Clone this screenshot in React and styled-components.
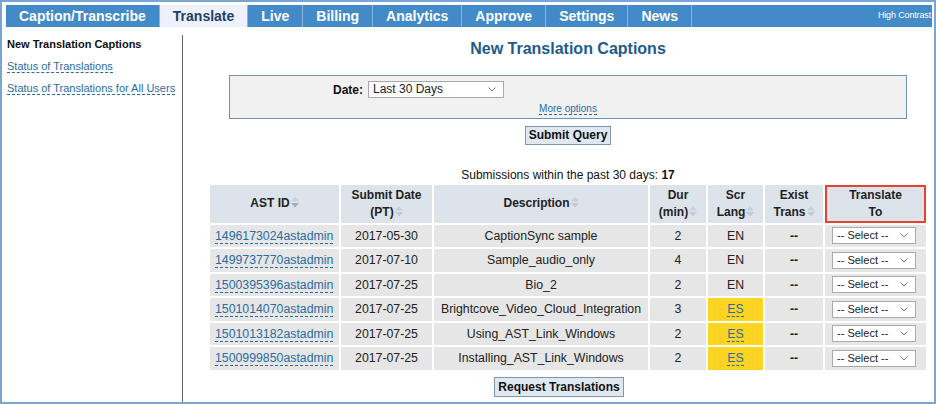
import React from "react";
import styled, { createGlobalStyle } from "styled-components";

const Global = createGlobalStyle`
  html, body { margin: 0; padding: 0; background: #fff; }
  body { font-family: "Liberation Sans", Arial, sans-serif; color: #222; }
  * { box-sizing: border-box; }
`;

const Frame = styled.div`
  width: 936px;
  height: 404px;
  border: 2px solid #78a5d1;
  padding: 3px 2px 0 4px;
  display: flex;
  flex-direction: column;
  overflow: hidden;
`;

const Nav = styled.nav`
  height: 22px;
  background: #428bc8;
  display: flex;
  align-items: stretch;
  flex-shrink: 0;
`;

const Tab = styled.a`
  display: flex;
  align-items: center;
  padding: 0 13px;
  font-size: 14px;
  font-weight: bold;
  color: ${(p) => (p.$active ? "#1c3f66" : "#fff")};
  background: ${(p) => (p.$active ? "#eef0fb" : "transparent")};
  border-right: 1px solid #8ab6dd;
  text-decoration: none;
  white-space: nowrap;
`;

const NavSpacer = styled.div`
  flex: 1;
`;

const Contrast = styled.a`
  align-self: center;
  margin-top: -2px;
  font-size: 9px;
  letter-spacing: -0.15px;
  color: #fff;
  white-space: nowrap;
  padding-right: 1px;
`;

const Body = styled.div`
  flex: 1;
  display: flex;
  margin-top: 8px;
  min-height: 0;
`;

const Sidebar = styled.aside`
  width: 177px;
  border-right: 1px solid #666;
  padding-left: 1px;
  flex-shrink: 0;
`;

const SideItem = styled.div`
  font-size: 11px;
  line-height: 18px;
  margin-bottom: 4px;
  font-weight: ${(p) => (p.$current ? "bold" : "normal")};
  color: #111;
`;

const Link = styled.a`
  color: #2b6ca3;
  text-decoration: none;
  border-bottom: 1px dashed #2b6ca3;
  cursor: pointer;
`;

const Main = styled.main`
  flex: 1;
  padding: 4px 0 0 21px;
  display: flex;
  flex-direction: column;
  align-items: center;
`;

const Title = styled.h1`
  margin: 0;
  font-size: 16px;
  line-height: 20px;
  font-weight: bold;
  color: #1d5b8c;
`;

const FilterBox = styled.div`
  margin-top: 16px;
  width: 678px;
  height: 44px;
  background: #f1f1f1;
  border: 1px solid #7391b1;
  padding-top: 5px;
  display: flex;
  flex-direction: column;
  align-items: center;
`;

const DateRow = styled.div`
  align-self: stretch;
  display: grid;
  grid-template-columns: 133px 136px;
  column-gap: 5px;
  align-items: center;
`;

const Label = styled.label`
  text-align: right;
  font-size: 12px;
  font-weight: bold;
  color: #111;
`;

const FauxSelect = styled.div`
  position: relative;
  width: ${(p) => p.$w}px;
  height: 17px;
  background: #fff;
  border: 1px solid #a9a9a9;
  font-size: ${(p) => p.$fs}px;
  line-height: 15px;
  padding-left: 4px;
  color: #222;
  text-align: left;
  white-space: nowrap;
`;

const Chevron = styled.svg`
  position: absolute;
  right: 7px;
  top: 5px;
`;

const MoreOptions = styled.div`
  margin-top: 4px;
  font-size: 10px;
  line-height: 13px;
`;

const Button = styled.button`
  font-family: "Liberation Sans", Arial, sans-serif;
  font-size: 12px;
  font-weight: bold;
  color: #111;
  background: #dfe8f1;
  border: 1px solid #7d97b3;
  height: ${(p) => p.$h}px;
  padding: 0 3px;
  cursor: pointer;
`;

const SubmitWrap = styled.div`
  margin-top: 6px;
`;

const Count = styled.div`
  margin-top: 23px;
  font-size: 12px;
  line-height: 14px;
  color: #111;
`;

const Table = styled.table`
  margin-top: 1px;
  border-collapse: separate;
  border-spacing: 2px;
  table-layout: fixed;
  width: 720px;
  font-size: 12.3px;
`;

const Th = styled.th`
  background: #dce3ea;
  height: 37px;
  font-weight: bold;
  font-size: 12px;
  line-height: 17px;
  color: #222;
  text-align: center;
  padding: 0;
  border: ${(p) => (p.$hl ? "2px solid #e5432b" : "none")};
`;

const Td = styled.td`
  background: ${(p) => (p.$hl ? "#fdd422" : "#e6e6e6")};
  height: 22.5px;
  padding: ${(p) => (p.$left ? "0 0 0 5px" : "0")};
  text-align: ${(p) => (p.$left ? "left" : "center")};
  color: #222;
  white-space: nowrap;
`;

const Dash = styled.span`
  font-weight: bold;
`;

const SelectCell = styled.div`
  display: flex;
  justify-content: center;
  padding-right: 3px;
`;

const RequestWrap = styled.div`
  margin-top: 5px;
  padding-right: 18px;
`;

const SortIcon = ({ down = "#c3cbd3" }) => (
  <svg width="8" height="11" viewBox="0 0 8 11" style={{ verticalAlign: "-1px", marginLeft: 1 }}>
    <path d="M4 0 L8 4.5 L0 4.5 Z" fill="#c8d0d8" />
    <path d="M0 6 L8 6 L4 10.5 Z" fill={down} />
  </svg>
);

const Select = ({ w, fs, text }) => (
  <FauxSelect $w={w} $fs={fs}>
    {text}
    <Chevron width="8" height="5" viewBox="0 0 8 5">
      <path d="M0.5 0.5 L4 4 L7.5 0.5" fill="none" stroke="#777" strokeWidth="1" />
    </Chevron>
  </FauxSelect>
);

const rows = [
  ["1496173024astadmin", "2017-05-30", "CaptionSync sample", "2", "EN"],
  ["1499737770astadmin", "2017-07-10", "Sample_audio_only", "4", "EN"],
  ["1500395396astadmin", "2017-07-25", "Bio_2", "2", "EN"],
  ["1501014070astadmin", "2017-07-25", "Brightcove_Video_Cloud_Integration", "3", "ES"],
  ["1501013182astadmin", "2017-07-25", "Using_AST_Link_Windows", "2", "ES"],
  ["1500999850astadmin", "2017-07-25", "Installing_AST_Link_Windows", "2", "ES"],
];

const tabs = ["Caption/Transcribe", "Translate", "Live", "Billing", "Analytics", "Approve", "Settings", "News"];

export default function App() {
  return (
    <>
      <Global />
      <Frame>
        <Nav>
          {tabs.map((t) => (
            <Tab key={t} $active={t === "Translate"}>{t}</Tab>
          ))}
          <NavSpacer />
          <Contrast>High Contrast</Contrast>
        </Nav>
        <Body>
          <Sidebar>
            <SideItem $current>New Translation Captions</SideItem>
            <SideItem><Link>Status of Translations</Link></SideItem>
            <SideItem><Link>Status of Translations for All Users</Link></SideItem>
          </Sidebar>
          <Main>
            <Title>New Translation Captions</Title>
            <FilterBox>
              <DateRow>
                <Label>Date:</Label>
                <Select w={136} fs={12} text="Last 30 Days" />
              </DateRow>
              <MoreOptions><Link>More options</Link></MoreOptions>
            </FilterBox>
            <SubmitWrap>
              <Button $h={19}>Submit Query</Button>
            </SubmitWrap>
            <Count>Submissions within the past 30 days: <b>17</b></Count>
            <Table>
              <colgroup>
                <col style={{ width: 129 }} />
                <col style={{ width: 91 }} />
                <col style={{ width: 214 }} />
                <col style={{ width: 56 }} />
                <col style={{ width: 55 }} />
                <col style={{ width: 58 }} />
                <col style={{ width: 101 }} />
              </colgroup>
              <thead>
                <tr>
                  <Th>AST ID<SortIcon down="#a3adb7" /></Th>
                  <Th>Submit Date<br />(PT)<SortIcon /></Th>
                  <Th>Description<SortIcon /></Th>
                  <Th>Dur<br />(min)<SortIcon /></Th>
                  <Th>Scr<br />Lang<SortIcon /></Th>
                  <Th>Exist<br />Trans<SortIcon /></Th>
                  <Th $hl>Translate<br />To</Th>
                </tr>
              </thead>
              <tbody>
                {rows.map((r) => (
                  <tr key={r[0]}>
                    <Td $left><Link>{r[0]}</Link></Td>
                    <Td>{r[1]}</Td>
                    <Td>{r[2]}</Td>
                    <Td>{r[3]}</Td>
                    {r[4] === "ES" ? (
                      <Td $hl><Link>ES</Link></Td>
                    ) : (
                      <Td>EN</Td>
                    )}
                    <Td><Dash>--</Dash></Td>
                    <Td>
                      <SelectCell>
                        <Select w={84} fs={11} text="-- Select --" />
                      </SelectCell>
                    </Td>
                  </tr>
                ))}
              </tbody>
            </Table>
            <RequestWrap>
              <Button $h={20}>Request Translations</Button>
            </RequestWrap>
          </Main>
        </Body>
      </Frame>
    </>
  );
}
